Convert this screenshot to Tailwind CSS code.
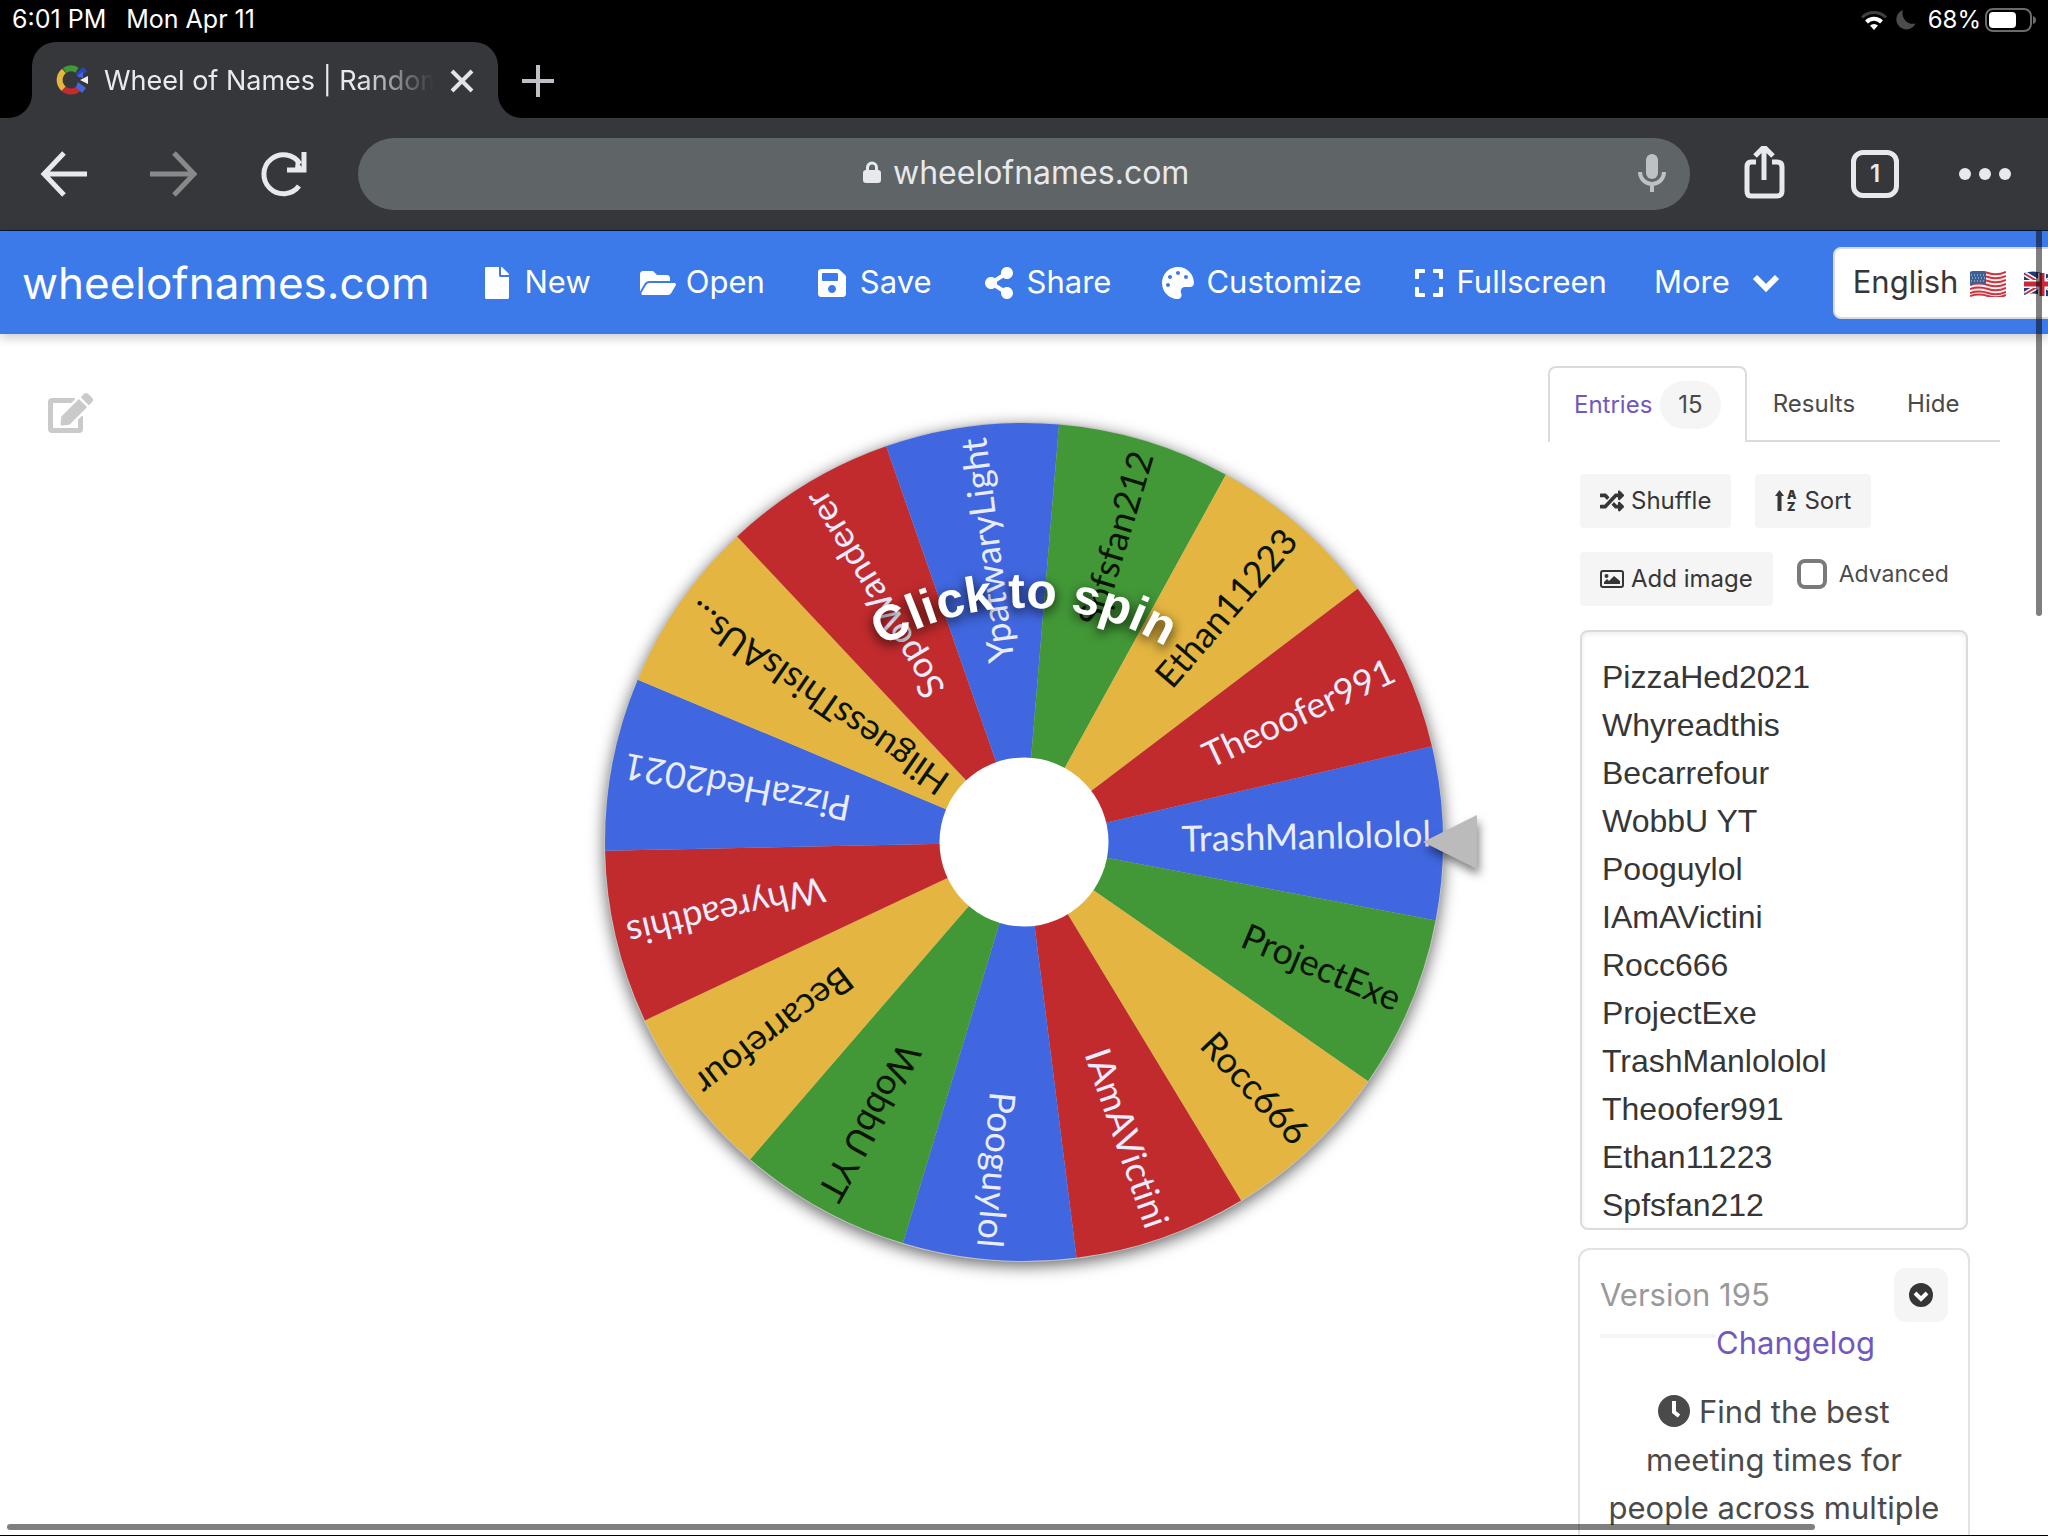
<!DOCTYPE html>
<html lang="en">
<head>
    <meta charset="UTF-8">
    <meta name="viewport" content="width=device-width, initial-scale=1.0">
    <title>Wheel of Names | Random name picker</title>
    <script src="https://cdn.jsdelivr.net/npm/@tailwindcss/browser@4"></script>
</head>
<body class="bg-white font-['Inter',sans-serif] text-[#4a4a4a]">
    <div class="relative h-screen flex flex-col overflow-hidden border-b border-black">
        <!-- Status bar -->
        <div class="h-10 shrink-0 flex items-center justify-between bg-black pl-3 pr-3 text-2xl text-white">
            <div class="flex gap-5 text-[25px]">
                <span>6:01 PM</span>
                <span>Mon Apr 11</span>
            </div>
            <div class="flex items-center">
                <svg class="w-7 h-5 mr-2" viewBox="0 0 28 20" fill="none" stroke-width="4">
                    <path d="M2 7.500A17 17 0 0 1 26 7.500" stroke="#3f3f3f" stroke-width="3"/>
                    <path d="M6.500 12A10.500 10.500 0 0 1 21.500 12" stroke="#fff"/>
                    <path d="M14 20l-4-4.500a6 6 0 0 1 8 0z" fill="#fff"/>
                </svg>
                <svg class="w-5 h-5 mr-3" viewBox="0 0 20 20" fill="#4c4c4e"><path d="M7 0A10 10 0 1 0 19.500 13.500A10.500 10.500 0 0 1 7 0z"/></svg>
                <span class="mr-1">68%</span>
                <svg class="w-[51px] h-6" viewBox="0 0 51 24">
                    <rect x="1" y="1" width="45" height="22" rx="7" fill="none" stroke="#6b6b6b" stroke-width="2"/>
                    <rect x="4" y="4" width="27" height="16" rx="4" fill="#fff"/>
                    <path d="M48 8q3 1 3 4t-3 4z" fill="#6b6b6b"/>
                </svg>
            </div>
        </div>

        <!-- Tab strip -->
        <div class="h-[78px] shrink-0 flex items-end bg-black pl-2">
            <svg class="w-6 h-6 shrink-0" viewBox="0 0 24 24" fill="#36373a"><path d="M24 0v24H0A24 24 0 0 0 24 0z"/></svg>
            <div class="w-[466px] h-[76px] flex items-center rounded-t-3xl bg-[#36373a] pl-6 pr-6 pt-0.5">
                <svg class="w-8 h-8 shrink-0 mr-4" viewBox="-15 -15 32 32" fill="none" stroke-width="6">
                    <path d="M-6.500 -9.500A11.500 11.500 0 0 1 6 -9.800" stroke="#429837"/>
                    <path d="M-7 9A11.500 11.500 0 0 1 -7 -9" stroke="#e4b740"/>
                    <path d="M7.500 8.700A11.500 11.500 0 0 1 -7.500 8.700" stroke="#c22c2c"/>
                    <path d="M5 -6L12 -13L16 -9L8 -2z" fill="#2a49b8"/>
                    <path d="M6 -4L12 -8V-2zM7 2L15 8L11 13L5 7z" fill="#4067e0"/>
                    <path d="M9 0L17 -4V4z" fill="#f0f0f0"/>
                </svg>
                <span class="flex-1 overflow-hidden whitespace-nowrap text-[27px] text-[#e8eaed] [mask-image:linear-gradient(to_right,#000_78%,transparent)]">Wheel of Names | Random name picker</span>
                <button class="shrink-0 ml-4" aria-label="Close tab">
                    <svg class="w-6 h-6" viewBox="0 0 24 24" stroke="#e3e4e8" stroke-width="4"><path d="M2 2l20 20M22 2L2 22"/></svg>
                </button>
            </div>
            <svg class="w-6 h-6 shrink-0" viewBox="0 0 24 24" fill="#36373a"><path d="M0 0v24h24A24 24 0 0 1 0 0z"/></svg>
            <button class="self-center pt-1" aria-label="New tab">
                <svg class="w-8 h-8" viewBox="0 0 32 32" stroke="#bdc1c6" stroke-width="4"><path d="M0 16h32M16 0v32"/></svg>
            </button>
        </div>

        <!-- Browser toolbar -->
        <div class="h-[113px] shrink-0 flex items-center border-b border-[#0b1733] bg-[#36373a] px-2 text-[#e8e9ed]">
            <button class="w-[110px] flex justify-center" aria-label="Back">
                <svg class="w-12 h-12" viewBox="0 0 48 48" fill="none" stroke="currentColor" stroke-width="5"><path d="M25 3L5 24l20 21M5 24h43"/></svg>
            </button>
            <button class="w-[110px] flex justify-center text-[#88898b]" aria-label="Forward">
                <svg class="w-12 h-12" viewBox="0 0 48 48" fill="none" stroke="currentColor" stroke-width="5"><path d="M25 3l20 21l-20 21M45 24H1"/></svg>
            </button>
            <button class="w-[110px] flex justify-center" aria-label="Reload">
                <svg class="w-12 h-12" viewBox="0 0 48 48" fill="none" stroke="currentColor" stroke-width="5"><path d="M40 36A19.500 19.500 0 1 1 41 14"/><path d="M45 2v18H28"/><path d="M37 9l7 10h-8z" fill="currentColor" stroke="none"/></svg>
            </button>
            <div class="relative flex-1 h-[72px] mx-5 flex items-center justify-center gap-3 rounded-full bg-[#5f6466] pl-2 pb-0.5">
                <svg class="w-[18px] h-6" viewBox="0 0 18 24"><rect y="9" width="18" height="13" rx="3" fill="#e8e9ed"/><path d="M4.500 10V6.500a4.500 4.500 0 0 1 9 0V10" fill="none" stroke="#e8e9ed" stroke-width="3"/></svg>
                <input type="text" class="w-[300px] bg-transparent text-[32px] text-[#e8e9ed] outline-none" value="wheelofnames.com" aria-label="Address">
                <button class="absolute right-6 text-[#bdc1c6]" aria-label="Voice search">
                    <svg class="w-7 h-10" viewBox="0 0 28 40" fill="none" stroke="currentColor" stroke-width="4"><rect x="8" y="1" width="12" height="25" rx="6" fill="currentColor" stroke="none"/><path d="M2 19a12 12 0 0 0 24 0M14 31v8"/></svg>
                </button>
            </div>
            <button class="w-[110px] flex justify-center" aria-label="Share page">
                <svg class="w-[42px] h-14" viewBox="1 4 42 56" fill="none" stroke="currentColor" stroke-width="5"><path d="M13 20H8q-4 0-4 5v24q0 5 4 5h26q5 0 5-5V25q0-5-5-5h-5"/><path d="M21 38V6M12 14l9-9l9 9"/></svg>
            </button>
            <button class="w-[110px] flex justify-center" aria-label="Show tabs">
                <span class="w-12 h-12 flex items-center justify-center rounded-xl border-[5px] border-[#e8e9ed] text-2xl font-semibold">1</span>
            </button>
            <button class="w-[110px] flex justify-center" aria-label="Menu">
                <svg class="w-[52px] h-3" viewBox="0 0 52 12" fill="currentColor"><circle cx="6" cy="6" r="6"/><circle cx="26" cy="6" r="6"/><circle cx="46" cy="6" r="6"/></svg>
            </button>
        </div>

        <!-- Site navbar -->
        <nav class="relative z-10 h-[103px] shrink-0 flex items-center gap-[43px] bg-[#3b7ae8] pl-[22px] text-[31px] text-white whitespace-nowrap shadow-[0_4px_10px_rgba(0,0,0,0.2)]">
            <a href="#" class="text-[44px]">wheelofnames.com</a>
            <a href="#" class="flex items-center gap-1">
                <span class="w-12 flex justify-center"><svg class="h-8" viewBox="0 0 384 512" fill="currentColor"><path d="M224 136V0H24C10.700 0 0 10.700 0 24v464c0 13.300 10.700 24 24 24h336c13.300 0 24-10.700 24-24V160H248c-13.200 0-24-10.800-24-24zm160-14.100v6.100H256V0h6.100c6.400 0 12.500 2.500 17 7l97.900 98c4.500 4.500 7 10.600 7 16.900z"/></svg></span>
                New
            </a>
            <a href="#" class="flex items-center gap-1">
                <span class="w-12 flex justify-center"><svg class="h-8" viewBox="0 0 576 512" fill="currentColor"><path d="M572.694 292.093L500.270 416.248A63.997 63.997 0 0 1 444.989 448H45.025c-18.523 0-30.064-20.093-20.731-36.093l72.424-124.155A64 64 0 0 1 152 256h399.964c18.523 0 30.064 20.093 20.730 36.093zM152 224h328v-48c0-26.510-21.490-48-48-48H272l-64-64H48C21.490 64 0 85.490 0 112v278.046l69.077-118.418C86.214 242.250 117.989 224 152 224z"/></svg></span>
                Open
            </a>
            <a href="#" class="flex items-center gap-1">
                <span class="w-12 flex justify-center"><svg class="h-8" viewBox="0 0 448 512" fill="currentColor"><path d="M433.941 129.941l-83.882-83.882A48 48 0 0 0 316.118 32H48C21.490 32 0 53.490 0 80v352c0 26.510 21.490 48 48 48h352c26.510 0 48-21.490 48-48V163.882a48 48 0 0 0-14.059-33.941zM224 416c-35.346 0-64-28.654-64-64 0-35.346 28.654-64 64-64s64 28.654 64 64c0 35.346-28.654 64-64 64zm96-304.520V212c0 6.627-5.373 12-12 12H76c-6.627 0-12-5.373-12-12V108c0-6.627 5.373-12 12-12h228.520c3.183 0 6.235 1.264 8.485 3.515l3.480 3.480A11.996 11.996 0 0 1 320 111.480z"/></svg></span>
                Save
            </a>
            <a href="#" class="flex items-center gap-1">
                <span class="w-12 flex justify-center"><svg class="h-8" viewBox="0 0 448 512" fill="currentColor"><path d="M352 320c-22.608 0-43.387 7.819-59.790 20.895l-102.486-64.054a96.551 96.551 0 0 0 0-41.683l102.486-64.054C308.613 184.181 329.392 192 352 192c53.019 0 96-42.981 96-96S405.019 0 352 0s-96 42.981-96 96c0 7.158.790 14.130 2.276 20.841L155.790 180.895C139.387 167.819 118.608 160 96 160c-53.019 0-96 42.981-96 96s42.981 96 96 96c22.608 0 43.387-7.819 59.790-20.895l102.486 64.054A96.301 96.301 0 0 0 256 416c0 53.019 42.981 96 96 96s96-42.981 96-96-42.981-96-96-96z"/></svg></span>
                Share
            </a>
            <a href="#" class="flex items-center gap-1">
                <span class="w-12 flex justify-center"><svg class="h-8" viewBox="0 0 512 512" fill="currentColor"><path d="M204.300 5C104.900 24.400 24.800 104.300 5.200 203.400c-37 187 131.700 326.400 258.800 306.700 41.200-6.400 61.400-54.600 42.500-91.700-23.100-45.400 9.900-98.400 60.900-98.400h79.700c35.800 0 64.800-29.600 64.900-65.300C511.500 97.100 368.100-26.900 204.300 5zM96 320c-17.700 0-32-14.300-32-32s14.300-32 32-32 32 14.300 32 32-14.300 32-32 32zm32-128c-17.700 0-32-14.300-32-32s14.300-32 32-32 32 14.300 32 32-14.300 32-32 32zm128-64c-17.700 0-32-14.300-32-32s14.300-32 32-32 32 14.300 32 32-14.300 32-32 32zm128 64c-17.700 0-32-14.300-32-32s14.300-32 32-32 32 14.300 32 32-14.300 32-32 32z"/></svg></span>
                Customize
            </a>
            <a href="#" class="flex items-center gap-1">
                <span class="w-12 flex justify-center"><svg class="h-8" viewBox="0 0 448 512" fill="currentColor"><path d="M0 180V56c0-13.300 10.700-24 24-24h124c6.600 0 12 5.400 12 12v40c0 6.600-5.400 12-12 12H64v84c0 6.600-5.400 12-12 12H12c-6.600 0-12-5.400-12-12zM288 44v40c0 6.600 5.400 12 12 12h84v84c0 6.600 5.400 12 12 12h40c6.600 0 12-5.400 12-12V56c0-13.300-10.700-24-24-24H300c-6.600 0-12 5.400-12 12zm148 276h-40c-6.600 0-12 5.400-12 12v84h-84c-6.600 0-12 5.400-12 12v40c0 6.600 5.400 12 12 12h124c13.300 0 24-10.700 24-24V332c0-6.600-5.400-12-12-12zM160 468v-40c0-6.600-5.400-12-12-12H64v-84c0-6.600-5.400-12-12-12H12c-6.600 0-12 5.400-12 12v124c0 13.300 10.700 24 24 24h124c6.600 0 12-5.400 12-12z"/></svg></span>
                Fullscreen
            </a>
            <button class="flex items-center gap-3 pl-1">
                More
                <span class="w-12 flex justify-center"><svg class="w-7 h-5" viewBox="0 0 28 20" fill="none" stroke="currentColor" stroke-width="6"><path d="M3 4l11 11L25 4"/></svg></span>
            </button>
            <div class="relative shrink-0">
                <select class="w-[400px] h-[72px] appearance-none rounded-lg border-2 border-[#dbdbdb] bg-white px-[18px] text-[31px] text-[#363636]" aria-label="Language">
                    <option>English</option>
                </select>
                <!-- Flags -->
                <div class="absolute left-[137px] top-6 flex gap-[18px] pointer-events-none">
                    <svg class="w-9 h-[26px]" viewBox="0 0 36 26">
                        <g fill="none" stroke-width="2">
                            <path stroke="#f4f0f0" stroke-width="24" d="M0 13q9-3 18 0t18-1"/>
                            <path stroke="#d0343f" d="M0 2q9-3 18 0t18-1M0 6q9-3 18 0t18-1M0 10q9-3 18 0t18-1M0 14q9-3 18 0t18-1M0 18q9-3 18 0t18-1M0 22q9-3 18 0t18-1M0 25q9-3 18 0t18-1"/>
                        </g>
                        <path fill="#3f6191" d="M0 1q8-3 16 0v13q-8-3-16 0z"/>
                        <path stroke="#c9d6e6" stroke-dasharray="1 2" d="M1 4h14M2 7h14M1 10h14"/>
                    </svg>
                    <svg class="w-9 h-[26px]" viewBox="0 0 36 26">
                        <path fill="#243a7c" d="M0 2q9-3 18 0t18-1v23q-9 3-18 0t-18 0z"/>
                        <path stroke="#fff" stroke-width="5" d="M1 3l34 20M35 3L1 23"/>
                        <path stroke="#c8283c" stroke-width="2" d="M1 3l34 20M35 3L1 23"/>
                        <path stroke="#fff" stroke-width="8" d="M18 2v23M0 13h36"/>
                        <path stroke="#c8283c" stroke-width="5" d="M18 2v23M0 13h36"/>
                    </svg>
                </div>
            </div>
        </nav>

        <!-- Main content -->
        <main class="flex-1 min-h-0 grid grid-cols-4">
            <div class="pl-12 pt-[59px]">
                <button class="text-[#cacaca]" aria-label="Edit title">
                    <svg class="h-10" viewBox="0 0 576 512" fill="currentColor"><path d="M402.600 83.200l90.200 90.200c3.800 3.800 3.800 10 0 13.800L274.400 405.600l-92.800 10.300c-12.400 1.400-22.900-9.100-21.500-21.500l10.300-92.800L388.800 83.200c3.800-3.800 10-3.800 13.800 0zm162-22.900l-48.800-48.800c-15.200-15.200-39.900-15.200-55.200 0l-35.400 35.400c-3.800 3.800-3.800 10 0 13.800l90.200 90.200c3.800 3.800 10 3.800 13.800 0l35.400-35.400c15.200-15.300 15.200-40 0-55.200zM384 346.200V448H64V128h229.800c3.200 0 6.200-1.300 8.500-3.500l40-40c7.600-7.600 2.200-20.500-8.500-20.500H48C21.500 64 0 85.500 0 112v352c0 26.500 21.500 48 48 48h352c26.500 0 48-21.500 48-48V306.200c0-10.700-12.900-16-20.500-8.500l-40 40c-2.200 2.300-3.500 5.300-3.500 8.500z"/></svg>
                </button>
            </div>

            <!-- Wheel -->
            <div class="col-span-2">
                <svg class="w-full" viewBox="-512 -508 1024 1024">
                    <defs>
                        <path id="arc" d="M-215 -132A277 277 0 0 1 215 -132"/>
                    </defs>
                    <circle r="420" class="drop-shadow-[0_4px_8px_rgba(0,0,0,0.6)]" fill="#c4c4c4"/>
                    <g id="slices"></g>
                    <circle r="84.500" fill="#fff"/>
                    <text class="font-['Liberation_Sans',sans-serif] text-[50px] font-bold drop-shadow-[0_4px_6px_rgba(0,0,0,0.8)]" fill="#fff" text-anchor="middle"><textPath href="#arc" startOffset="50%">Click to spin</textPath></text>
                    <path class="drop-shadow-[2px_6px_5px_rgba(0,0,0,0.5)]" d="M399 0L453 -27V27z" fill="#bbb"/>
                </svg>
            </div>

            <!-- Side panel -->
            <div class="pl-3 pr-12 pt-8">
                <div class="flex text-2xl">
                    <button class="h-[76px] flex items-center gap-2 rounded-t-lg border-2 border-b-0 border-[#dbdbdb] px-6 text-[#7158bf]">
                        Entries
                        <span class="rounded-full bg-[#f5f5f5] px-[18px] py-2 leading-8 text-[#4a4a4a]">15</span>
                    </button>
                    <div class="flex-1 flex items-center gap-13 border-b-2 border-[#dbdbdb] pl-[26px] pt-0.5">
                        <button>Results</button>
                        <button>Hide</button>
                    </div>
                </div>

                <div class="px-8 pt-8">
                    <div class="flex gap-6 text-2xl text-[#363636]">
                        <button class="h-[54px] flex items-center gap-[7px] rounded bg-[#f5f5f5] px-5">
                            <svg class="w-6 h-6" viewBox="0 0 512 512" fill="currentColor"><path d="M504.971 359.029c9.373 9.373 9.373 24.569 0 33.941l-80 79.984c-15.010 15.010-40.971 4.490-40.971-16.971V416h-58.785a12.004 12.004 0 0 1-8.773-3.812l-70.556-75.596 53.333-57.143L352 336h32v-39.981c0-21.438 25.943-31.998 40.971-16.971l80 79.981zM12 176h84l52.781 56.551 53.333-57.143-70.556-75.596A11.999 11.999 0 0 0 122.785 96H12c-6.627 0-12 5.373-12 12v56c0 6.627 5.373 12 12 12zm372 0v39.984c0 21.460 25.961 31.980 40.971 16.971l80-79.984c9.373-9.373 9.373-24.569 0-33.941l-80-79.981C409.943 24.021 384 34.582 384 56.019V96h-58.785a12.004 12.004 0 0 0-8.773 3.812L96 336H12c-6.627 0-12 5.373-12 12v56c0 6.627 5.373 12 12 12h110.785c3.326 0 6.503-1.381 8.773-3.812L352 176h32z"/></svg>
                            Shuffle
                        </button>
                        <button class="h-[54px] flex items-center gap-[7px] rounded bg-[#f5f5f5] px-5">
                            <svg class="w-[22px] h-6 overflow-visible" viewBox="0 0 22 24" fill="currentColor">
                                <path d="M4.500 1L9 7H6.500v15h-4V7H0z"/>
                                <text x="12" y="10" class="text-[12px] font-black">A</text>
                                <text x="12" y="22" class="text-[12px] font-black">Z</text>
                            </svg>
                            Sort
                        </button>
                    </div>
                    <div class="mt-6 flex gap-6 text-2xl">
                        <button class="h-[54px] flex items-center gap-[7px] rounded bg-[#f5f5f5] px-5 text-[#363636]">
                            <svg class="w-6 h-[18px]" viewBox="0 0 24 18" fill="currentColor"><rect x="1" y="1" width="22" height="16" rx="2" fill="none" stroke="currentColor" stroke-width="2"/><circle cx="6.500" cy="6" r="2"/><path d="M4 14v-2l3-3l2 2l5-5l6 5v3z"/></svg>
                            Add image
                        </button>
                        <label class="h-11 flex items-center gap-3 text-[23px]">
                            <input type="checkbox" class="w-[30px] h-[30px] appearance-none rounded-lg border-4 border-[#7a7a7a]">
                            Advanced
                        </label>
                    </div>
                    <textarea class="block mt-6 w-full h-[600px] resize-none overflow-hidden rounded-lg border-2 border-[#dbdbdb] px-5 pt-[21px] font-['Liberation_Sans',sans-serif] text-[32px] leading-[48px] text-[#363636] shadow-[inset_0_2px_4px_rgba(0,0,0,0.08)]" aria-label="Entries">
PizzaHed2021
Whyreadthis
Becarrefour
WobbU YT
Pooguylol
IAmAVictini
Rocc666
ProjectExe
TrashManlololol
Theoofer991
Ethan11223
Spfsfan212
YpatwaryLight
SopoWanderer
HiIguessThisIsAUsername</textarea>

                    <!-- Version card -->
                    <section class="-mx-0.5 mt-[18px] rounded-xl border-2 border-[#e2e2e2] px-5 pt-[18px] pb-40 text-[31px]">
                        <div class="flex items-center justify-between">
                            <span class="text-[#999]">Version 195</span>
                            <button class="w-[54px] h-[54px] flex items-center justify-center rounded-xl bg-[#f5f5f5]" aria-label="Expand">
                                <svg class="w-6 h-6" viewBox="0 0 24 24"><circle cx="12" cy="12" r="12" fill="#363636"/><path d="M6 10l6 6l6-6" fill="none" stroke="#fff" stroke-width="4"/></svg>
                            </button>
                        </div>
                        <div class="flex">
                            <hr class="mt-3 w-[116px] border-0 h-1 bg-[#f5f5f5]">
                            <a href="#" class="leading-[42px] text-[#7158bf]">Changelog</a>
                        </div>
                        <p class="mt-6 text-center leading-[48px]">
                            <svg class="inline-block align-[-4px] w-8 h-8" viewBox="0 0 32 32"><circle cx="16" cy="16" r="16" fill="#4a4a4a"/><path d="M16 6v11l5 4" fill="none" stroke="#fff" stroke-width="4"/></svg>
                            Find the best meeting times for people across multiple
                        </p>
                    </section>
                </div>
            </div>
        </main>

        <!-- Scrollbars -->
        <div class="absolute z-20 right-[6px] top-[231px] w-[6px] h-[385px] rounded-b-full bg-black/50"></div>
        <div class="absolute z-20 left-[7px] right-[233px] bottom-[5px] h-[6px] rounded-full bg-black/50"></div>
    </div>

    <script>
        // Clockwise from the slice under the pointer
        const slices = [
            ['TrashManlololol', 'blue'],
            ['ProjectExe', 'green'],
            ['Rocc666', 'yellow'],
            ['IAmAVictini', 'red'],
            ['Pooguylol', 'blue'],
            ['WobbU YT', 'green'],
            ['Becarrefour', 'yellow'],
            ['Whyreadthis', 'red'],
            ['PizzaHed2021', 'blue'],
            ['HiIguessThisIsAUs...', 'yellow'],
            ['SopoWanderer', 'red'],
            ['YpatwaryLight', 'blue'],
            ['Spfsfan212', 'green'],
            ['Ethan11223', 'yellow'],
            ['Theoofer991', 'red']
        ];
        const colors = { blue: '#4067e0', green: '#429837', yellow: '#e4b540', red: '#c22b2d' };
        const radius = 419;
        const step = 360 / slices.length;
        const half = step / 2 * Math.PI / 180;
        const x = radius * Math.cos(half);
        const y = radius * Math.sin(half);

        document.getElementById('slices').innerHTML = slices.map(([name, color], i) => {
            const dark = color === 'green' || color === 'yellow';
            return `<g transform="rotate(${i * step - 1.2})">
                <path d="M0 0L${x} ${-y}A${radius} ${radius} 0 0 1 ${x} ${y}z" fill="${colors[color]}"/>
                <text class="[font-variant-ligatures:none]" x="407" dy="0.360em" text-anchor="end" font-family="Lato, sans-serif" font-size="36" fill="${dark ? '#0b1400' : '#e9ecff'}">${name}</text>
            </g>`;
        }).join('');
    </script>
</body>
</html>
